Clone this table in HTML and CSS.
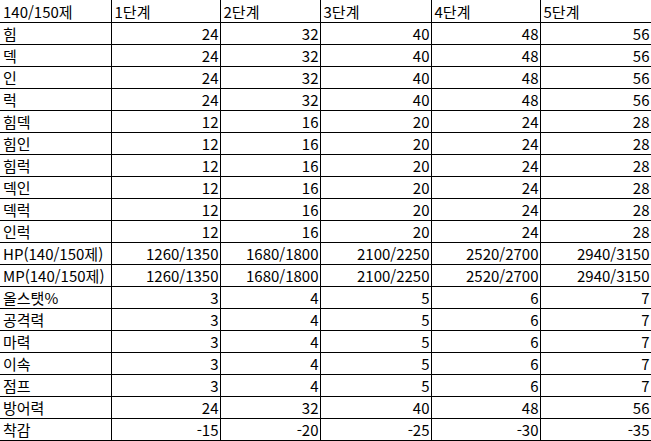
FILE: index.html
```html
<!DOCTYPE html>
<html lang="ko">
<head>
<meta charset="utf-8">
<link rel="stylesheet" href="styles.css">
</head>
<body>
<div class="frame">
<table class="sheet">
<colgroup>
<col class="c1"><col class="c2"><col class="c3"><col class="c4"><col class="c5"><col class="c6">
</colgroup>
<tr class="head"><td>140/150제</td><td>1단계</td><td>2단계</td><td>3단계</td><td>4단계</td><td>5단계</td></tr>
<tr><td>힘</td><td class="n">24</td><td class="n">32</td><td class="n">40</td><td class="n">48</td><td class="n">56</td></tr>
<tr><td>덱</td><td class="n">24</td><td class="n">32</td><td class="n">40</td><td class="n">48</td><td class="n">56</td></tr>
<tr><td>인</td><td class="n">24</td><td class="n">32</td><td class="n">40</td><td class="n">48</td><td class="n">56</td></tr>
<tr><td>럭</td><td class="n">24</td><td class="n">32</td><td class="n">40</td><td class="n">48</td><td class="n">56</td></tr>
<tr><td>힘덱</td><td class="n">12</td><td class="n">16</td><td class="n">20</td><td class="n">24</td><td class="n">28</td></tr>
<tr><td>힘인</td><td class="n">12</td><td class="n">16</td><td class="n">20</td><td class="n">24</td><td class="n">28</td></tr>
<tr><td>힘럭</td><td class="n">12</td><td class="n">16</td><td class="n">20</td><td class="n">24</td><td class="n">28</td></tr>
<tr><td>덱인</td><td class="n">12</td><td class="n">16</td><td class="n">20</td><td class="n">24</td><td class="n">28</td></tr>
<tr><td>덱럭</td><td class="n">12</td><td class="n">16</td><td class="n">20</td><td class="n">24</td><td class="n">28</td></tr>
<tr><td>인럭</td><td class="n">12</td><td class="n">16</td><td class="n">20</td><td class="n">24</td><td class="n">28</td></tr>
<tr><td>HP(140/150제)</td><td class="n">1260/1350</td><td class="n">1680/1800</td><td class="n">2100/2250</td><td class="n">2520/2700</td><td class="n">2940/3150</td></tr>
<tr><td>MP(140/150제)</td><td class="n">1260/1350</td><td class="n">1680/1800</td><td class="n">2100/2250</td><td class="n">2520/2700</td><td class="n">2940/3150</td></tr>
<tr><td>올스탯%</td><td class="n">3</td><td class="n">4</td><td class="n">5</td><td class="n">6</td><td class="n">7</td></tr>
<tr><td>공격력</td><td class="n">3</td><td class="n">4</td><td class="n">5</td><td class="n">6</td><td class="n">7</td></tr>
<tr><td>마력</td><td class="n">3</td><td class="n">4</td><td class="n">5</td><td class="n">6</td><td class="n">7</td></tr>
<tr><td>이속</td><td class="n">3</td><td class="n">4</td><td class="n">5</td><td class="n">6</td><td class="n">7</td></tr>
<tr><td>점프</td><td class="n">3</td><td class="n">4</td><td class="n">5</td><td class="n">6</td><td class="n">7</td></tr>
<tr><td>방어력</td><td class="n">24</td><td class="n">32</td><td class="n">40</td><td class="n">48</td><td class="n">56</td></tr>
<tr><td>착감</td><td class="n">-15</td><td class="n">-20</td><td class="n">-25</td><td class="n">-30</td><td class="n">-35</td></tr>
</table>
</div>
</body>
</html>
```

FILE: styles.css
```css
html, body {
  margin: 0;
  padding: 0;
  background: #ffffff;
}
body {
  width: 651px;
  height: 441px;
  overflow: hidden;
}
.frame {
  width: 651px;
  border-bottom: 1px solid #dce3ee;
}
.sheet {
  border-collapse: collapse;
  table-layout: fixed;
  width: 651px;
  font-family: "Noto Sans CJK KR", "Noto Sans", sans-serif;
  font-size: 15px;
  color: #000;
}
.c1 { width: 111px; }
.c2 { width: 109px; }
.c3 { width: 100px; }
.c4 { width: 111px; }
.c5 { width: 109px; }
.c6 { width: 111px; }
.sheet td {
  height: 22px;
  padding: 0 1px 0 3px;
  line-height: 21px;
  border-right: 1px solid #000;
  border-bottom: 1px solid #000;
  white-space: nowrap;
  overflow: hidden;
  vertical-align: bottom;
  box-sizing: border-box;
}
.sheet td.n {
  text-align: right;
}
```
